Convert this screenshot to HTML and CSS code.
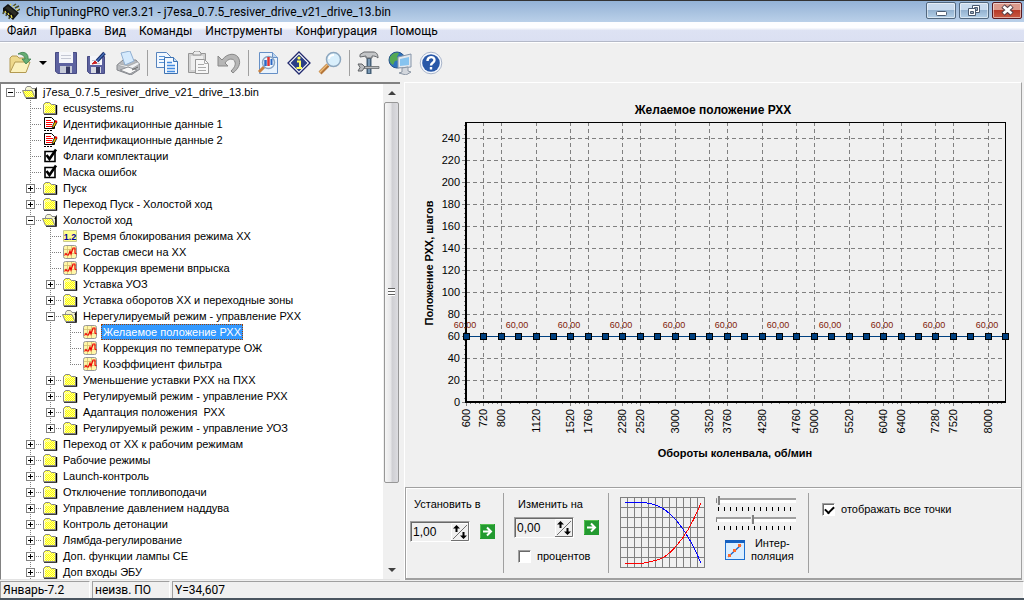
FILE: index.html
```html
<!DOCTYPE html>
<html lang="ru">
<head>
    <meta charset="UTF-8">
    <meta name="viewport" content="width=device-width, initial-scale=1.0">
    <title>ChipTuningPRO</title>
    <link rel="stylesheet" href="styles.css">
</head>
<body>
    <!-- Shared icons -->
    <svg class="symbols" aria-hidden="true">
        <defs>
            <pattern id="dither" width="2" height="2" patternUnits="userSpaceOnUse">
                <rect width="2" height="2" fill="#ffff98"/>
                <rect width="1" height="1" fill="#ffff00"/>
                <rect x="1" y="1" width="1" height="1" fill="#ffff00"/>
            </pattern>
        </defs>
        <symbol id="folder" viewBox="0 0 16 16">
            <path d="M2 14h12.500V5" fill="none" stroke="#000" stroke-width="1.400"/>
            <path d="M1.500 13.500v-9l2-2h4l2 2h4v9z" fill="url(#dither)" stroke="#8a8a8a"/>
            <path d="M2.500 12.500v-7.500h6" fill="none" stroke="#fff" stroke-width="0.8"/>
        </symbol>
        <symbol id="folder-open" viewBox="0 0 16 16">
            <path d="M3.500 13V4.500l1.500-2h3.500l1.500 2h3.500V13" fill="#f4f4d0" stroke="#8a8a8a"/>
            <path d="M4 14h10V5.500L13 7" fill="none" stroke="#000" stroke-width="1.600"/>
            <path d="M3.500 13.500l-3-7h9.500l3 7z" fill="url(#dither)" stroke="#8a8a8a"/>
        </symbol>
        <symbol id="doc" viewBox="0 0 16 16">
            <path d="M2.500 12.500v-11h7l3 3v8z" fill="#fff" stroke="#000"/>
            <path d="M4 4.500h5M4 6.500h7M4 8.500h6M4 10.500h6" stroke="#f00" stroke-width="1.200"/>
            <path d="M2 14.500h8" stroke="#000" stroke-dasharray="2 1"/>
            <path d="M10 13l1-4 2-4 2 1-2 4z" fill="#f5c400" stroke="#000" stroke-width="0.8"/>
            <path d="M13 5l2 1" stroke="#e00" stroke-width="2"/>
        </symbol>
        <symbol id="flag" viewBox="0 0 16 16">
            <path d="M3 3.500h10v10H3z" fill="#fff" stroke="#000" stroke-width="1.600"/>
            <path d="M4.500 7l3 4L14 1.500" fill="none" stroke="#000" stroke-width="2.600"/>
        </symbol>
        <symbol id="graph" viewBox="0 0 16 16">
            <rect x="1.500" y="1.500" width="13" height="13" rx="2" fill="#fff6a8" stroke="#999"/>
            <path d="M5.500 2v12M9.500 2v12M2 5.500h12M2 9.500h12" stroke="#d0c070" stroke-width="0.8"/>
            <path d="M2.500 11.500l1.500-2 1 1.500 1.500 0 1.500-4 1 3 2-6h2v5l1.500 1" fill="none" stroke="#f00000" stroke-width="1.200"/>
        </symbol>
        <symbol id="go" viewBox="0 0 15 15">
            <rect width="15" height="15" fill="#239a30"/>
            <path d="M.5 14V.5H14" fill="none" stroke="#55c050"/>
            <path d="M3 7.500h8M7 3.500l4 4-4 4" fill="none" stroke="#fff" stroke-width="2"/>
        </symbol>
        <symbol id="spin" viewBox="0 0 18 18">
            <path d="M0 0h18v18H0z" fill="#f0f0f0"/>
            <path d="M0 17.500h17.500V0M2 16L16 2" fill="none" stroke="#707070"/>
            <path d="M.5 17V.5H17" fill="none" stroke="#fff"/>
            <path d="M5.500 2L9 5.500H6.500V9h-2V5.500H2zM12.500 16L9 12.500h2.500V9h2v3.500H16z"/>
        </symbol>
    </svg>

    <header class="titlebar">
        <svg class="app-icon" viewBox="0 0 18 18" aria-hidden="true">
            <path d="M2 8l-1 3M5 10l-1 3M8 12l-1 4M7 3l-2 1M11 3l3-2M13 5l4-2M15 8l3-2" stroke="#4a4a20" stroke-width="1.500"/>
            <path d="M1 5l5-4 11 9-6 7L1 8z" fill="#111"/>
            <path d="M3 5l3-2 9 7-2 3z" fill="#2d2d24"/>
            <path d="M3 8l1 2M6 10l1 2M9 12l1 3M8 2l1-1M11 4l1-1M14 7l2-1" stroke="#e2d94a" stroke-width="1.300"/>
        </svg>
        <h1>ChipTuningPRO ver.3.21 - j7esa_0.7.5_resiver_drive_v21_drive_13.bin</h1>
        <div class="window-buttons">
            <button type="button" aria-label="Свернуть">
                <svg viewBox="0 0 28 15"><rect x="9.500" y="8.500" width="10" height="4" rx="1" fill="#fff" stroke="#4a5a70"/></svg>
            </button>
            <button type="button" aria-label="Восстановить">
                <svg viewBox="0 0 28 15"><path d="M12.500 2.500h7v7h-7z" fill="#fff" stroke="#4a5a70"/><path d="M14.500 4.500h3v3h-3z" fill="#9ab" stroke="#4a5a70"/><path d="M8.500 5.500h7v7h-7z" fill="#fff" stroke="#4a5a70"/><path d="M10.500 8.500h3v2h-3z" fill="#9ab" stroke="#4a5a70"/></svg>
            </button>
            <button type="button" class="close" aria-label="Закрыть">
                <svg viewBox="0 0 28 15"><path d="M10 3l9 8M19 3l-9 8" stroke="#55414a" stroke-width="5"/><path d="M10.500 3.500l8 7M18.500 3.500l-8 7" stroke="#fff" stroke-width="2.800"/></svg>
            </button>
        </div>
    </header>

    <nav class="menubar">
        <a href="#">Файл</a>
        <a href="#">Правка</a>
        <a href="#">Вид</a>
        <a href="#">Команды</a>
        <a href="#">Инструменты</a>
        <a href="#">Конфигурация</a>
        <a href="#">Помощь</a>
    </nav>

    <div class="toolbar">
        <button type="button" aria-label="Открыть">
            <svg viewBox="0 0 24 24"><path d="M2 21V7l2-2h5l2 2h7v14z" fill="#eed98c" stroke="#b39a52"/><path d="M2 21.500L7 11h15l-4 10.500z" fill="#fbf1bd" stroke="#b39a52"/><path d="M10 3c6-4 11 0 10 5h3l-5 5-4-5h3c0-3-3-5-7-5z" fill="#66ad73" stroke="#3d8050" stroke-width="0.8"/></svg>
        </button>
        <button type="button" class="drop" aria-label="Недавние файлы">
            <svg viewBox="0 0 8 8"><path d="M0 2h8L4 6z"/></svg>
        </button>
        <button type="button" aria-label="Сохранить">
            <svg viewBox="0 0 24 24"><path d="M1.500 1.500h21v21H4l-2.500-2z" fill="#5d62a0" stroke="#474b83"/><path d="M5 1h14v11H5z" fill="#f5f6fa"/><path d="M7 4.500h10M7 7.500h10" stroke="#c5c8d4"/><path d="M6 15h12v7H6z" fill="#c6cad8"/><path d="M12 15.500h4v7h-4z" fill="#343861"/></svg>
        </button>
        <button type="button" aria-label="Сохранить как">
            <svg viewBox="0 0 24 24"><path d="M2.500 5.500h17v17h-15l-2-2z" fill="#5d62a0" stroke="#474b83"/><path d="M5 5h12v9H5z" fill="#f5f6fa"/><path d="M7 9.500h8M7 12.500h8" stroke="#b8bccc"/><path d="M6 16h10v6H6z" fill="#d6d9e2"/><path d="M11 16h4v6h-4z" fill="#343861"/><path d="M12 10L19.500 2" stroke="#182c6a" stroke-width="3.500"/><path d="M12 10L19.500 2" stroke="#4670b8" stroke-width="1.200"/><path d="M7 13l5-1-2-2z" fill="#c22" stroke="#c22"/></svg>
        </button>
        <button type="button" aria-label="Печать">
            <svg viewBox="0 0 24 24"><path d="M1 14l6-5h13l4 5v4l-9 6L1 19z" fill="#b7b9bd" stroke="#85878c"/><path d="M5 2l9-2 4 10-9 4z" fill="#d5eafd" stroke="#91b0d2"/><path d="M1.500 14l14 4 8-5-2-2-9 4-9-2z" fill="#f0f1f3" stroke="#9b9da1" stroke-width="0.7"/><path d="M4 19l8-3 9 3-7 4z" fill="#f8f8f8" stroke="#8e9095"/><path d="M16 19l6-3" stroke="#666"/></svg>
        </button>
        <span class="divider"></span>
        <button type="button" aria-label="Копировать">
            <svg viewBox="0 0 24 24"><path d="M1.500 1.500h10l4 4v11h-14z" fill="#f2f8ff" stroke="#5683bd"/><path d="M4 5.500h6M4 8.500h7M4 11.500h7" stroke="#5994d8"/><path d="M9.500 6.500h9l4 4v12h-13z" fill="#f2f8ff" stroke="#3d72b2"/><path d="M18.500 6.500v4h4" fill="#c5ddf5" stroke="#3d72b2"/><path d="M12 11.500h5M12 14.500h8M12 17.500h8M12 20.500h8" stroke="#448be0" stroke-width="1.300"/></svg>
        </button>
        <button type="button" aria-label="Вставить">
            <svg viewBox="0 0 24 24"><path d="M2.500 2.500h17v19h-17z" fill="#d2d2d2" stroke="#969696"/><path d="M7 4V2l2-2h4l2 2v2z" fill="#ececec" stroke="#929292"/><path d="M5 5h12v14H5z" fill="#eee"/><path d="M9.500 8.500h9l4 4v10h-13z" fill="#f7f7f7" stroke="#999"/><path d="M18.500 8.500v4h4M12 13.500h6M12 16.500h8M12 19.500h8" fill="none" stroke="#aaa"/></svg>
        </button>
        <button type="button" aria-label="Отменить">
            <svg viewBox="0 0 24 24"><path d="M1 5v10h10l-3-3c3-5 9-5 10-1 1 3-1 6-4 9l2 2c5-4 8-9 6-14C20 2 11 1 5 9z" fill="#b6b6b6" stroke="#888"/></svg>
        </button>
        <span class="divider"></span>
        <button type="button" aria-label="Просмотр">
            <svg viewBox="0 0 24 24"><path d="M3.500 1.500h13l5 5v16h-18z" fill="#e9f3fd" stroke="#6690c6"/><path d="M16.500 1.500v5h5" fill="#bcd5ef" stroke="#6690c6"/><path d="M9 15l-6 6" stroke="#c9803e" stroke-width="3"/><circle cx="12.500" cy="11.500" r="6" fill="#f4f9ff" stroke="#8ba6c3" stroke-width="1.500"/><path d="M9.500 9v6" stroke="#2b68c4" stroke-width="2.500"/><path d="M12.500 6v9" stroke="#e03434" stroke-width="2.500"/><path d="M15.500 8v6" stroke="#2b68c4" stroke-width="2"/></svg>
        </button>
        <button type="button" aria-label="Информация">
            <svg viewBox="0 0 24 24"><path d="M12 1l11 11-11 11L1 12z" fill="#fff" stroke="#20286e" stroke-width="1.300"/><path d="M12 3.500l8.500 8.500-8.500 8.500L3.500 12z" fill="#2c3f86"/><circle cx="12" cy="7" r="1.600" fill="#ffff5c"/><path d="M10 10.500h3V17M9.500 17h5.500" fill="none" stroke="#ffff5c" stroke-width="2"/></svg>
        </button>
        <button type="button" aria-label="Найти">
            <svg viewBox="0 0 24 24"><path d="M10 14l-8 8" stroke="#b5763a" stroke-width="4"/><path d="M9.500 13.500l-8 8" stroke="#f0bd79" stroke-width="1.500"/><circle cx="15.500" cy="8.500" r="7" fill="#d9effc" stroke="#8da7bf" stroke-width="1.500"/><path d="M11 8c0-3 3-4 5-4" fill="none" stroke="#fff" stroke-width="2"/></svg>
        </button>
        <span class="divider"></span>
        <button type="button" aria-label="Настройки">
            <svg viewBox="0 0 24 24"><path d="M12 7v16" stroke="#466078" stroke-width="5"/><path d="M12 8v14" stroke="#7898b5" stroke-width="2"/><path d="M3 3.500l4-2.500h9c4 0 5 3 5 6-2-2-4-2-6-2v2H9V5L3 6z" fill="#c4c6c8" stroke="#66696c"/><path d="M6 15.500h16v2H6z" fill="#b8babd" stroke="#66696c" stroke-width="0.800"/><path d="M1 13h4l3 3-3 4H1l2-3.500z" fill="#b8babd" stroke="#606366"/></svg>
        </button>
        <button type="button" aria-label="Сеть">
            <svg viewBox="0 0 24 24"><circle cx="9" cy="9" r="8" fill="#2e72bd" stroke="#28538a"/><path d="M2 6c2-4 6-5 9-4l-2 4 2 3-4 1-2 4c-3-2-4-4-3-8z" fill="#55a854"/><path d="M10 6l13-3v13l-13 1z" fill="#e4e8ed" stroke="#8494a8"/><path d="M12 8l9-2v8l-9 1z" fill="#86c3ef"/><path d="M14 17l6-1v4l3 1-5 3-7-2 3-1z" fill="#d3d7dd" stroke="#8c97a5"/></svg>
        </button>
        <button type="button" aria-label="Справка">
            <svg viewBox="0 0 24 24"><circle cx="12" cy="12" r="10.800" fill="#f5f8fd" stroke="#a8b4c9"/><circle cx="12" cy="12" r="8.800" fill="#2958a8"/><path d="M8.500 10c0-5 7-5 7-1 0 3-3.500 2.500-3.500 5.500M12 16v2.500" fill="none" stroke="#fff" stroke-width="2.400"/></svg>
        </button>
    </div>

    <main class="workspace">
        <section class="tree-pane">
            <ul class="tree">
                <li>
                    <div class="node"><button type="button" class="toggle open" aria-label="Свернуть"></button><svg class="icon"><use href="#folder-open"/></svg><span>j7esa_0.7.5_resiver_drive_v21_drive_13.bin</span></div>
                    <ul>
                        <li><div class="node"><svg class="icon"><use href="#folder"/></svg><span>ecusystems.ru</span></div></li>
                        <li><div class="node"><svg class="icon"><use href="#doc"/></svg><span>Идентификационные данные 1</span></div></li>
                        <li><div class="node"><svg class="icon"><use href="#doc"/></svg><span>Идентификационные данные 2</span></div></li>
                        <li><div class="node"><svg class="icon"><use href="#flag"/></svg><span>Флаги комплектации</span></div></li>
                        <li><div class="node"><svg class="icon"><use href="#flag"/></svg><span>Маска ошибок</span></div></li>
                        <li><div class="node"><button type="button" class="toggle" aria-label="Развернуть"></button><svg class="icon"><use href="#folder"/></svg><span>Пуск</span></div></li>
                        <li><div class="node"><button type="button" class="toggle" aria-label="Развернуть"></button><svg class="icon"><use href="#folder"/></svg><span>Переход Пуск - Холостой ход</span></div></li>
                        <li>
                            <div class="node"><button type="button" class="toggle open" aria-label="Свернуть"></button><svg class="icon"><use href="#folder-open"/></svg><span>Холостой ход</span></div>
                            <ul>
                                <li><div class="node"><svg class="icon" viewBox="0 0 16 16"><path d="M1.500 2.500h13v11h-13z" fill="#ffff8c" stroke="#c8c890"/><text x="8" y="12" text-anchor="middle" class="number-text">1.2</text></svg><span>Время блокирования режима ХХ</span></div></li>
                                <li><div class="node"><svg class="icon"><use href="#graph"/></svg><span>Состав смеси на ХХ</span></div></li>
                                <li><div class="node"><svg class="icon"><use href="#graph"/></svg><span>Коррекция времени впрыска</span></div></li>
                                <li><div class="node"><button type="button" class="toggle" aria-label="Развернуть"></button><svg class="icon"><use href="#folder"/></svg><span>Уставка УОЗ</span></div></li>
                                <li><div class="node"><button type="button" class="toggle" aria-label="Развернуть"></button><svg class="icon"><use href="#folder"/></svg><span>Уставка оборотов ХХ и переходные зоны</span></div></li>
                                <li>
                                    <div class="node"><button type="button" class="toggle open" aria-label="Свернуть"></button><svg class="icon"><use href="#folder-open"/></svg><span>Нерегулируемый режим - управление РХХ</span></div>
                                    <ul>
                                        <li><div class="node selected"><svg class="icon"><use href="#graph"/></svg><span>Желаемое положение РХХ</span></div></li>
                                        <li><div class="node"><svg class="icon"><use href="#graph"/></svg><span>Коррекция по температуре ОЖ</span></div></li>
                                        <li><div class="node"><svg class="icon"><use href="#graph"/></svg><span>Коэффициент фильтра</span></div></li>
                                    </ul>
                                </li>
                                <li><div class="node"><button type="button" class="toggle" aria-label="Развернуть"></button><svg class="icon"><use href="#folder"/></svg><span>Уменьшение уставки РХХ на ПХХ</span></div></li>
                                <li><div class="node"><button type="button" class="toggle" aria-label="Развернуть"></button><svg class="icon"><use href="#folder"/></svg><span>Регулируемый режим - управление РХХ</span></div></li>
                                <li><div class="node"><button type="button" class="toggle" aria-label="Развернуть"></button><svg class="icon"><use href="#folder"/></svg><span>Адаптация положения&nbsp; РХХ</span></div></li>
                                <li><div class="node"><button type="button" class="toggle" aria-label="Развернуть"></button><svg class="icon"><use href="#folder"/></svg><span>Регулируемый режим - управление УОЗ</span></div></li>
                            </ul>
                        </li>
                        <li><div class="node"><button type="button" class="toggle" aria-label="Развернуть"></button><svg class="icon"><use href="#folder"/></svg><span>Переход от ХХ к рабочим режимам</span></div></li>
                        <li><div class="node"><button type="button" class="toggle" aria-label="Развернуть"></button><svg class="icon"><use href="#folder"/></svg><span>Рабочие режимы</span></div></li>
                        <li><div class="node"><button type="button" class="toggle" aria-label="Развернуть"></button><svg class="icon"><use href="#folder"/></svg><span>Launch-контроль</span></div></li>
                        <li><div class="node"><button type="button" class="toggle" aria-label="Развернуть"></button><svg class="icon"><use href="#folder"/></svg><span>Отключение топливоподачи</span></div></li>
                        <li><div class="node"><button type="button" class="toggle" aria-label="Развернуть"></button><svg class="icon"><use href="#folder"/></svg><span>Управление давлением наддува</span></div></li>
                        <li><div class="node"><button type="button" class="toggle" aria-label="Развернуть"></button><svg class="icon"><use href="#folder"/></svg><span>Контроль детонации</span></div></li>
                        <li><div class="node"><button type="button" class="toggle" aria-label="Развернуть"></button><svg class="icon"><use href="#folder"/></svg><span>Лямбда-регулирование</span></div></li>
                        <li><div class="node"><button type="button" class="toggle" aria-label="Развернуть"></button><svg class="icon"><use href="#folder"/></svg><span>Доп. функции лампы CE</span></div></li>
                        <li><div class="node"><button type="button" class="toggle" aria-label="Развернуть"></button><svg class="icon"><use href="#folder"/></svg><span>Доп входы ЭБУ</span></div></li>
                    </ul>
                </li>
            </ul>
            <div class="scrollbar">
                <button type="button" aria-label="Вверх"><svg viewBox="0 0 8 6"><path d="M0 5l4-4 4 4z"/></svg></button>
                <div class="track"><div class="thumb"><i></i></div></div>
                <button type="button" aria-label="Вниз"><svg viewBox="0 0 8 6"><path d="M0 1h8L4 5z"/></svg></button>
            </div>
        </section>

        <section class="editor">
            <svg id="chart" viewBox="0 -2 616 404" role="img" aria-label="Желаемое положение РХХ"></svg>

            <form class="controls">
                <div class="group set">
                    <label for="setValue">Установить в</label>
                    <div class="line">
                        <div class="spinner">
                            <input type="text" id="setValue" value="1,00">
                            <button type="button" aria-label="Изменить значение"><svg><use href="#spin"/></svg></button>
                        </div>
                        <button type="button" class="go" aria-label="Установить"><svg><use href="#go"/></svg></button>
                    </div>
                </div>
                <div class="group change">
                    <label for="changeValue">Изменить на</label>
                    <div class="line">
                        <div class="spinner">
                            <input type="text" id="changeValue" value="0,00">
                            <button type="button" aria-label="Изменить значение"><svg><use href="#spin"/></svg></button>
                        </div>
                        <button type="button" class="go" aria-label="Изменить"><svg><use href="#go"/></svg></button>
                    </div>
                    <label class="check"><input type="checkbox">процентов</label>
                </div>
                <div class="group curves">
                    <svg class="curve-view" viewBox="0 0 86 72" aria-hidden="true">
                        <path id="curveGrid" stroke="#808080" fill="none"/>
                        <path d="M5 5.500h16Q32 6 40 10T57 24Q70 40 81 66" stroke="#0000ff" fill="none"/>
                        <path d="M5 66.500h16Q32 65 40 62T57 48Q69 35 81 6" stroke="#ff0000" fill="none"/>
                    </svg>
                    <div class="sliders">
                        <input type="range" min="0" max="12" value="0" aria-label="Левая граница">
                        <input type="range" min="0" max="20" value="9" aria-label="Правая граница">
                        <button type="button" class="interpolate">
                            <svg viewBox="0 0 20 20"><rect x=".5" y=".5" width="19" height="19" fill="#dbeeff" stroke="#1c6fd0"/><path d="M0 0h20v3H0z" fill="#1560c0"/><path d="M3 17L16 5" stroke="#1f5fc0" stroke-width="1.200"/><path d="M3 14h3v3H3zM8 9h3v3H8zM13 4h3v3h-3z" fill="#ff6a2a"/></svg>
                            <span>Интер-<br>поляция</span>
                        </button>
                    </div>
                </div>
                <div class="group options">
                    <label class="check"><input type="checkbox" checked>отображать все точки</label>
                </div>
            </form>
        </section>
    </main>

    <footer class="statusbar">
        <span>Январь-7.2</span>
        <span>неизв. ПО</span>
        <span>Y=34,607</span>
    </footer>

    <script>
        const chart = document.getElementById("chart");
        const plot = { left: 61, right: 600, top: 37, bottom: 317 };
        const pointCount = 32;
        const value = 60;
        // rpm captions, keyed by point index
        const rpm = {
            0: 600, 1: 720, 2: 800, 4: 1120, 6: 1520, 7: 1760, 9: 2280, 10: 2520, 12: 3000, 14: 3520,
            15: 3760, 17: 4280, 19: 4760, 20: 5000, 22: 5520, 24: 6040, 25: 6400, 27: 7280, 28: 7520, 30: 8000
        };

        const px = i => Math.round(plot.left + i * (plot.right - plot.left) / (pointCount - 1));
        const py = v => Math.round(plot.bottom - v * 1.1);

        function add(name, attrs, text) {
            const el = document.createElementNS("http://www.w3.org/2000/svg", name);
            for (const key in attrs) el.setAttribute(key, attrs[key]);
            if (text) el.textContent = text;
            chart.appendChild(el);
        }

        function line(cls, x1, y1, x2, y2) {
            add("path", { class: cls, d: `M${x1} ${y1}L${x2} ${y2}` });
        }

        // horizontal grid and Y scale
        for (let v = 0; v <= 240; v += 20) {
            const y = py(v) + 0.5;
            if (v > 0) line("grid", plot.left, y, plot.right, y);
            line("tick", plot.left - 4, y, plot.left, y);
            add("text", { class: "scale", x: plot.left - 6, y: py(v) + 4, "text-anchor": "end" }, String(v));
        }
        for (let v = 0; v <= 252; v += 4) {
            line("tick", plot.left - 2, py(v) + 0.5, plot.left, py(v) + 0.5);
        }

        // vertical grid and X scale
        const marks = Object.keys(rpm).map(Number);
        marks.forEach((i, n) => {
            const x = px(i) + 0.5;
            if (i > 0) line("grid", x, plot.top, x, plot.bottom);
            line("tick", x, plot.bottom, x, plot.bottom + 4);
            add("text", { class: "scale", x: 0, y: 0, "text-anchor": "end", transform: `translate(${px(i) + 4} ${plot.bottom + 7}) rotate(-90)` }, String(rpm[i]));
            const next = n + 1 < marks.length ? px(marks[n + 1]) : plot.right;
            for (let k = 1; k < 4; k++) {
                const mx = Math.round(px(i) + k * (next - px(i)) / 4) + 0.5;
                line("tick", mx, plot.bottom, mx, plot.bottom + 2);
            }
        });

        // frame
        add("path", { class: "frame", d: `M${plot.left} ${plot.top + 0.5}H${plot.right + 0.5}V${plot.bottom}` });
        add("rect", { x: plot.left - 1, y: plot.top, width: 2, height: plot.bottom - plot.top });
        add("rect", { x: plot.left - 1, y: plot.bottom - 1, width: plot.right - plot.left + 2, height: 2 });

        // data series
        line("series", plot.left, py(value) + 0.5, plot.right, py(value) + 0.5);
        for (let i = 0; i < pointCount; i++) {
            add("rect", { class: "point", x: px(i) - 2.5, y: py(value) - 2.5, width: 6, height: 6 });
            if (i % 3 === 0) {
                add("text", { class: "value", x: px(i) - 1, y: py(value) - 8, "text-anchor": "middle" }, "60,00");
            }
        }

        add("text", { class: "title", x: 308, y: 29, "text-anchor": "middle" }, "Желаемое положение РХХ");
        add("text", { class: "axis-title", x: 330, y: 372, "text-anchor": "middle" }, "Обороты коленвала, об/мин");
        add("text", { class: "axis-title", "text-anchor": "middle", transform: "translate(28 178) rotate(-90)" }, "Положение РХХ, шагов");

        // preview grid
        let grid = "";
        for (let x = 0; x <= 84; x += 7) grid += `M${x + 0.5} 0V71`;
        for (let y = 0; y <= 70; y += 10) grid += `M0 ${y + 0.5}H85`;
        document.getElementById("curveGrid").setAttribute("d", grid);
    </script>
</body>
</html>
```
FILE: styles.css
```css
* {
    box-sizing: border-box;
}

body {
    margin: 0;
    height: 100vh;
    display: flex;
    flex-direction: column;
    overflow: hidden;
    background-color: #f0f0f0;
    color: #000;
    font-family: "Liberation Sans", Arial, sans-serif;
    font-size: 11px;
    border-top: 1px solid #333;
}

button {
    padding: 0;
    border: none;
    background: none;
    color: inherit;
    font: inherit;
}

.symbols {
    position: absolute;
    width: 0;
    height: 0;
}

.number-text {
    font-size: 9px;
    font-weight: bold;
    fill: #0000a0;
}

/* Title bar */
.titlebar {
    display: flex;
    align-items: center;
    flex: 0 0 21px;
    padding: 0 2px;
    background: linear-gradient(#93b2d6, #a7c1df 50%, #bad0e9);
}

.app-icon {
    width: 18px;
    height: 18px;
    margin-right: 6px;
}

.titlebar h1 {
    flex: 1;
    margin: 0;
    font-family: Roboto, "Segoe UI", sans-serif;
    font-size: 12px;
    font-weight: normal;
    line-height: 20px;
    white-space: nowrap;
}

.window-buttons {
    display: flex;
    align-self: flex-start;
    gap: 3px;
}

.window-buttons button {
    width: 30px;
    height: 17px;
    margin-top: 1px;
    border: 1px solid #52687f;
    border-radius: 2px;
    background: linear-gradient(#c8daee 45%, #94b2d0 50%, #b4d0e8);
    box-shadow: inset 0 0 0 1px rgba(255, 255, 255, 0.5);
}

.window-buttons .close {
    border-color: #5a1a20;
    background: linear-gradient(#dc9a8c 45%, #b83a28 50%, #c85a44);
}

.window-buttons svg {
    display: block;
    width: 28px;
    height: 15px;
}

/* Menu */
.menubar {
    display: flex;
    flex: 0 0 20px;
    gap: 13px;
    padding: 0 7px;
    background: linear-gradient(#fdfdff 30%, #dde2f3 45%, #dbe0f2);
    border-bottom: 1px solid #b4b9c8;
    font-family: Roboto, "Segoe UI", sans-serif;
    font-size: 12px;
    line-height: 19px;
}

.menubar a {
    color: #000;
    text-decoration: none;
}

/* Toolbar */
.toolbar {
    display: flex;
    align-items: center;
    flex: 0 0 40px;
    padding: 0 4px;
    border-top: 1px solid #fff;
}

.toolbar button {
    width: 31px;
    height: 24px;
}

.toolbar svg {
    display: block;
    width: 24px;
    height: 24px;
    margin: 0 auto;
}

.toolbar .drop {
    width: 15px;
}

.toolbar .drop svg {
    width: 8px;
    height: 8px;
}

.divider {
    width: 1px;
    height: 26px;
    margin: 0 3px 0 4px;
    background-color: #a0a0a0;
}

/* Tree */
.workspace {
    flex: 1;
    min-height: 0;
    display: grid;
    grid-template-columns: 400px 1fr;
    gap: 4px;
    padding-right: 2px;
}

.tree-pane {
    display: flex;
    min-height: 0;
    background-color: #fff;
    border-top: 2px solid #828282;
    border-left: 1px solid #828282;
    border-bottom: 1px solid #e3e3e3;
}

.tree {
    flex: 1;
    overflow: hidden;
    white-space: nowrap;
}

.tree,
.tree ul {
    margin: 0;
    padding: 0;
    list-style: none;
}

.tree ul {
    margin-left: 20px;
}

.tree ul li {
    background: repeating-linear-gradient(#808080 0 1px, transparent 1px 2px) 9px 0 / 1px 100% no-repeat;
}

.tree ul ul li:last-child {
    background-size: 1px 8px;
}

.node {
    display: flex;
    align-items: center;
    height: 16px;
    padding-left: 5px;
    background: repeating-linear-gradient(to right, #808080 0 1px, transparent 1px 2px) 9px 8px / 12px 1px no-repeat;
}

.toggle {
    width: 9px;
    height: 9px;
    margin-right: -9px;
    border: 1px solid #808080;
    background: linear-gradient(#000, #000) 1px 3px / 5px 1px no-repeat, linear-gradient(#000, #000) 3px 1px / 1px 5px no-repeat, #fff;
}

.toggle.open {
    background: linear-gradient(#000, #000) 1px 3px / 5px 1px no-repeat, #fff;
}

.icon {
    width: 16px;
    height: 16px;
    margin-left: 16px;
    margin-right: 3px;
}

.node span {
    padding: 0 2px;
    line-height: 16px;
}

.selected span {
    background-color: #3399ff;
    color: #fff;
    outline: 1px dotted #a04000;
    outline-offset: -1px;
}

/* Scrollbar */
.scrollbar {
    display: flex;
    flex-direction: column;
    flex: 0 0 17px;
    background-color: #f0f0f0;
}

.scrollbar button {
    height: 18px;
}

.scrollbar svg {
    display: block;
    width: 8px;
    height: 6px;
    margin: 0 auto;
    fill: #404040;
}

.track {
    flex: 1;
    padding: 0 1px;
}

.thumb {
    display: flex;
    align-items: center;
    justify-content: center;
    height: 83%;
    border: 1px solid #979797;
    border-radius: 2px;
    background: linear-gradient(to right, #f5f5f5, #e6e6e8 45%, #cfcfd3 55%, #dcdce0);
}

.thumb i {
    width: 7px;
    height: 8px;
    background: repeating-linear-gradient(#606060 0 1px, #fff 1px 3px);
}

/* Chart */
.editor {
    display: flex;
    flex-direction: column;
    min-width: 0;
    border-top: 1px solid #fff;
    border-left: 1px solid #fff;
    border-right: 1px solid #a0a0a0;
}

#chart {
    flex: 1;
    min-height: 0;
    width: 100%;
    shape-rendering: crispEdges;
}

#chart .grid {
    stroke: #808080;
    stroke-dasharray: 4 3;
}

#chart .tick {
    stroke: #808080;
}

#chart .frame {
    fill: none;
    stroke: #000;
}

#chart .series {
    stroke: #004080;
}

#chart .point {
    fill: #004080;
    stroke: #000;
}

#chart .scale {
    font-size: 11px;
}

#chart .value {
    font-size: 9px;
    fill: #80200a;
}

#chart .title {
    font-size: 12px;
    font-weight: bold;
}

#chart .axis-title {
    font-size: 11px;
    font-weight: bold;
}

/* Bottom controls */
.controls {
    display: flex;
    flex: 0 0 93px;
    padding: 5px 0;
    border-top: 1px solid #a0a0a0;
    border-left: 1px solid #a0a0a0;
    border-bottom: 2px solid #a0a0a0;
    box-shadow: inset 1px 1px 0 #fff;
}

.group {
    display: flex;
    flex-direction: column;
    border-right: 1px solid #a0a0a0;
}

.set {
    width: 98px;
    padding: 4px 4px;
    gap: 10px;
}

.change {
    width: 105px;
    padding: 4px 10px;
    gap: 6px;
}

.group > label {
    padding-left: 4px;
    line-height: 14px;
}

.line {
    display: flex;
    align-items: center;
    gap: 10px;
}

.spinner {
    display: flex;
    flex: 0 0 60px;
    min-width: 0;
    height: 21px;
    border: 1px solid #a0a0a0;
    border-right-color: #fff;
    border-bottom-color: #fff;
    box-shadow: inset 1px 1px 0 #696969;
}

.spinner input {
    flex: 1;
    width: 0;
    min-width: 0;
    padding: 0 2px;
    border: none;
    background: none;
    font: inherit;
    font-size: 12px;
}

.spinner svg {
    display: block;
    width: 18px;
    height: 18px;
}

.go svg {
    display: block;
    width: 15px;
    height: 15px;
}

.check {
    display: flex;
    align-items: center;
    gap: 6px;
}

.change .check {
    margin-top: 5px;
}

.check input {
    appearance: none;
    width: 13px;
    height: 13px;
    margin: 0;
    background-color: #fff;
    border: 1px solid #a0a0a0;
    border-right-color: #fff;
    border-bottom-color: #fff;
    box-shadow: inset 1px 1px 0 #696969;
}

.check input:checked::before {
    content: "";
    display: block;
    width: 7px;
    height: 4px;
    margin: 2px;
    border-left: 2px solid #000;
    border-bottom: 2px solid #000;
    transform: rotate(-45deg);
}

.curves {
    flex-direction: row;
    gap: 10px;
    width: 200px;
    padding: 4px 11px;
}

.curve-view {
    flex: 0 0 86px;
    height: 72px;
    shape-rendering: crispEdges;
}

.sliders {
    flex: 1;
}

.sliders input {
    appearance: none;
    display: block;
    width: 80px;
    height: 19px;
    margin: 0;
    background: repeating-linear-gradient(to right, #000 0 1px, transparent 1px 6px) 2px 10px / 77px 4px no-repeat;
}

.sliders input::-webkit-slider-runnable-track {
    height: 5px;
    margin-bottom: 12px;
    background-color: #fff;
    border-top: 2px solid #a0a0a0;
    border-left: 1px solid #808080;
}

.sliders input::-webkit-slider-thumb {
    appearance: none;
    width: 3px;
    height: 9px;
    margin-top: -4px;
    background-color: #e8e8e8;
    border-right: 2px solid #808080;
}

.interpolate {
    display: flex;
    align-items: center;
    gap: 6px;
    padding: 2px 0 0 9px;
    line-height: 13px;
}

.interpolate svg {
    width: 20px;
    height: 20px;
}

.options {
    flex: 1;
    border-right: none;
    padding: 9px;
}

/* Status bar */
.statusbar {
    display: flex;
    flex: 0 0 18px;
    gap: 2px;
    margin-top: 2px;
    border-bottom: 2px solid #4a5560;
    font-family: Roboto, Tahoma, sans-serif;
    font-size: 12px;
    line-height: 16px;
}

.statusbar span {
    width: 90px;
    padding-left: 2px;
    border-top: 1px solid #a0a0a0;
    border-left: 1px solid #a0a0a0;
    border-right: 1px solid #fff;
}

.statusbar span:nth-child(2) {
    width: 78px;
}

.statusbar span:last-child {
    flex: 1;
}
```
